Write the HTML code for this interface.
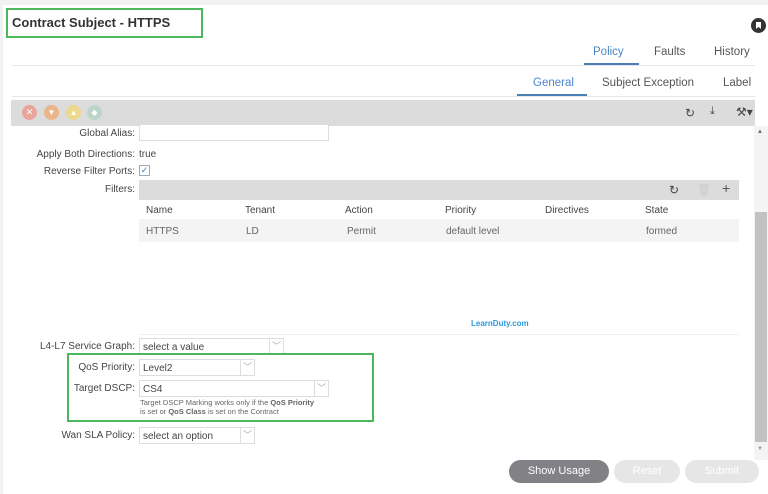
<!DOCTYPE html>
<html><head><style>
*{box-sizing:border-box}
body{margin:0;width:768px;height:494px;background:#f2f2f2;font-family:"Liberation Sans",sans-serif;position:relative;overflow:hidden;color:#333}
.p{position:absolute}
.main{left:3px;top:5px;width:765px;height:489px;background:#fff}
.lbl{font-size:10px;color:#444;text-align:right;width:135px;left:0}
.t{font-size:10px;color:#444}
.inp{border:1px solid #ddd;background:#fff;height:17px}
.sel{border:1px solid #ddd;background:#fff;height:17px;font-size:10px;color:#444;padding:3px 3px}
.sel i{position:absolute;right:0;top:0;width:14px;height:15px;border-left:1px solid #ddd;font-style:normal;color:#aaa;font-size:9px;text-align:center;line-height:14px}
.tab{font-size:11.5px;color:#555}
.btn{border-radius:12px;font-size:11px;text-align:center;line-height:23px;height:23px}
.ic{width:15px;height:15px;border-radius:50%;color:#fff;font-size:8px;text-align:center;line-height:15px}
</style></head><body>
<div class="p main"></div>
<div class="p" style="left:6px;top:8px;width:197px;height:30px;border:2px solid #4cb85c"></div>
<div class="p" style="left:12px;top:15px;font-size:13px;font-weight:bold;color:#333">Contract Subject - HTTPS</div>
<div class="p" style="left:751px;top:18px;width:15px;height:15px;border-radius:50%;background:#333"><div class="p" style="left:5px;top:4px;width:5px;height:7px;background:#fff;clip-path:polygon(0 0,100% 0,100% 100%,50% 70%,0 100%)"></div></div>
<div class="p tab" style="left:593px;top:46px;color:#4a86c5">Policy</div>
<div class="p" style="left:584px;top:63px;width:55px;height:2px;background:#4a7fb5"></div>
<div class="p tab" style="left:654px;top:46px">Faults</div>
<div class="p tab" style="left:714px;top:46px">History</div>
<div class="p" style="left:12px;top:65px;width:743px;height:1px;background:#e6e6e6"></div>
<div class="p tab" style="left:533px;top:77px;color:#4a86c5">General</div>
<div class="p" style="left:517px;top:94px;width:70px;height:2px;background:#4a7fb5"></div>
<div class="p tab" style="left:602px;top:77px">Subject Exception</div>
<div class="p tab" style="left:723px;top:77px">Label</div>
<div class="p" style="left:12px;top:96px;width:743px;height:1px;background:#e6e6e6"></div>
<div class="p" style="left:11px;top:100px;width:744px;height:26px;background:#dcdcdc"></div>
<div class="p ic" style="left:22px;top:105px;background:#e8a59c;font-size:9px">✕</div>
<div class="p ic" style="left:44px;top:105px;background:#ebb58a">▼</div>
<div class="p ic" style="left:66px;top:105px;background:#ecd98d">▲</div>
<div class="p ic" style="left:87px;top:105px;background:#b9d6c8">◆</div>
<div class="p" style="left:685px;top:106px;font-size:12px;color:#444">↻</div>
<div class="p" style="left:710px;top:105px;font-size:11px;color:#444">⤓</div>
<div class="p" style="left:736px;top:105px;font-size:12px;color:#444">⚒▾</div>
<div class="p" style="left:754px;top:126px;width:14px;height:334px;background:#f4f4f4"></div>
<div class="p" style="left:757px;top:129px;font-size:6px;color:#666">▲</div>
<div class="p" style="left:755px;top:212px;width:12px;height:230px;background:#c2c2c2"></div>
<div class="p" style="left:757px;top:446px;font-size:6px;color:#999">▼</div>
<div class="p lbl" style="top:128px">Global Alias:</div>
<div class="p inp" style="left:139px;top:124px;width:190px"></div>
<div class="p lbl" style="top:149px">Apply Both Directions:</div>
<div class="p t" style="left:139px;top:149px">true</div>
<div class="p lbl" style="top:166px">Reverse Filter Ports:</div>
<div class="p" style="left:139px;top:165px;width:11px;height:11px;border:1px solid #9ab;font-size:9px;color:#3a7fc5;line-height:9px;text-align:center">✓</div>
<div class="p lbl" style="top:184px">Filters:</div>
<div class="p" style="left:139px;top:180px;width:600px;height:20px;background:#dcdcdc"></div>
<div class="p" style="left:669px;top:183px;font-size:12px;color:#444">↻</div>
<div class="p" style="left:697px;top:183px;font-size:11px;color:#ccc">🗑</div>
<div class="p" style="left:722px;top:180px;font-size:14px;color:#555">+</div>
<div class="p t" style="left:146px;top:205px">Name</div>
<div class="p t" style="left:245px;top:205px">Tenant</div>
<div class="p t" style="left:345px;top:205px">Action</div>
<div class="p t" style="left:445px;top:205px">Priority</div>
<div class="p t" style="left:545px;top:205px">Directives</div>
<div class="p t" style="left:645px;top:205px">State</div>
<div class="p" style="left:139px;top:219px;width:600px;height:23px;background:#f4f4f4"></div>
<div class="p t" style="left:146px;top:226px;color:#666">HTTPS</div>
<div class="p t" style="left:246px;top:226px;color:#666">LD</div>
<div class="p t" style="left:347px;top:226px;color:#666">Permit</div>
<div class="p t" style="left:446px;top:226px;color:#666">default level</div>
<div class="p t" style="left:646px;top:226px;color:#666">formed</div>
<div class="p" style="left:471px;top:319px;font-size:8px;font-weight:bold;color:#2a9be0">LearnDuty.com</div>
<div class="p" style="left:139px;top:334px;width:600px;height:1px;background:#eee"></div>
<div class="p lbl" style="top:341px">L4-L7 Service Graph:</div>
<div class="p sel" style="left:139px;top:338px;width:145px">select a value<i>﹀</i></div>
<div class="p" style="left:67px;top:353px;width:307px;height:69px;border:2px solid #4cb85c"></div>
<div class="p lbl" style="top:362px">QoS Priority:</div>
<div class="p sel" style="left:139px;top:359px;width:116px">Level2<i>﹀</i></div>
<div class="p lbl" style="top:383px">Target DSCP:</div>
<div class="p sel" style="left:139px;top:380px;width:190px">CS4<i>﹀</i></div>
<div class="p" style="left:140px;top:398px;font-size:7.5px;color:#666;line-height:9px">Target DSCP Marking works only if the <b>QoS Priority</b><br>is set or <b>QoS Class</b> is set on the Contract</div>
<div class="p lbl" style="top:430px">Wan SLA Policy:</div>
<div class="p sel" style="left:139px;top:427px;width:116px">select an option<i>﹀</i></div>
<div class="p btn" style="left:509px;top:460px;width:100px;background:#818186;color:#fff">Show Usage</div>
<div class="p btn" style="left:614px;top:460px;width:66px;background:#e6e6e6;color:#fff">Reset</div>
<div class="p btn" style="left:685px;top:460px;width:74px;background:#e6e6e6;color:#fff">Submit</div>
</body></html>
